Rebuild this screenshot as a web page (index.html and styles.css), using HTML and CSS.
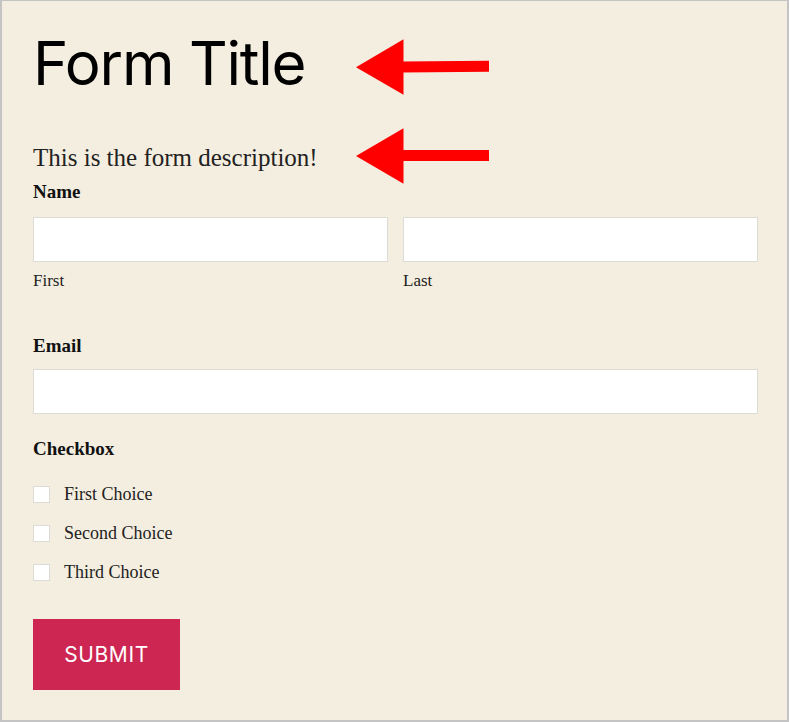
FILE: index.html
```html
<!DOCTYPE html>
<html>
<head>
<meta charset="utf-8">
<link rel="stylesheet" href="styles.css">
</head>
<body>
<div class="frame">
  <form class="form">
    <h1 class="title">Form Title</h1>
    <p class="desc">This is the form description!</p>
    <div class="field">
      <div class="label">Name</div>
      <div class="name-row">
        <div class="sub">
          <div class="input"></div>
          <div class="sublabel">First</div>
        </div>
        <div class="sub">
          <div class="input"></div>
          <div class="sublabel">Last</div>
        </div>
      </div>
    </div>
    <div class="field email">
      <div class="label">Email</div>
      <div class="input"></div>
    </div>
    <div class="field checks">
      <div class="label">Checkbox</div>
      <ul class="choices">
        <li><span class="box"></span>First Choice</li>
        <li><span class="box"></span>Second Choice</li>
        <li><span class="box"></span>Third Choice</li>
      </ul>
    </div>
    <div class="submit">SUBMIT</div>
  </form>
  <svg class="arrows" width="789" height="722" viewBox="0 0 789 722">
    <polygon fill="#ff0000" points="356,67.3 403.5,39.3 403.5,94.7"/>
    <polygon fill="#ff0000" points="402,61.6 489,60.7 489,71.7 402,72.6"/>
    <polygon fill="#ff0000" points="356,156 403.5,128.3 403.5,183.7"/>
    <polygon fill="#ff0000" points="402,150 489,150 489,161 402,161"/>
  </svg>
</div>
</body>
</html>
```

FILE: styles.css
```css
html, body {
  margin: 0;
  padding: 0;
}
body {
  width: 789px;
  height: 722px;
  background: #f4eee0;
}
.frame {
  position: relative;
  box-sizing: border-box;
  width: 789px;
  height: 722px;
  border-style: solid;
  border-color: #c4c4c4;
  border-width: 1px 2px 2px 2px;
  background: #f4eee0;
  overflow: hidden;
}
.form {
  padding: 0 29px 0 31px;
  color: #111;
  font-family: "Liberation Serif", serif;
}
.title {
  margin: 0;
  padding-top: 25px;
  font-family: Inter, "Noto Sans", sans-serif;
  font-weight: 400;
  font-size: 60px;
  line-height: 74px;
  letter-spacing: -1.2px;
  color: #000;
}
.desc {
  margin: 44px 0 0;
  font-size: 25px;
  line-height: 28px;
  color: #222;
}
.label {
  font-weight: 700;
  font-size: 19px;
  line-height: 22px;
  color: #111;
}
.field {
  margin-top: 9px;
}
.name-row {
  display: grid;
  grid-template-columns: 1fr 1fr;
  gap: 15px;
  margin-top: 14px;
}
.input {
  box-sizing: border-box;
  height: 45px;
  background: #fff;
  border: 1px solid #dcdcd6;
}
.sublabel {
  margin-top: 9px;
  font-size: 17px;
  line-height: 20px;
  color: #222;
}
.email {
  margin-top: 44px;
}
.email .input {
  margin-top: 12px;
}
.checks {
  margin-top: 24px;
}
.choices {
  list-style: none;
  margin: 26px 0 0;
  padding: 0;
}
.choices li {
  display: flex;
  align-items: center;
  gap: 14px;
  height: 17px;
  margin-bottom: 22px;
  font-size: 18px;
  color: #222;
}
.box {
  box-sizing: border-box;
  width: 17px;
  height: 17px;
  background: #fff;
  border: 1px solid #dcdcd6;
}
.submit {
  box-sizing: border-box;
  width: 147px;
  height: 71px;
  margin-top: 38px;
  background: #cd2653;
  color: #fff;
  display: flex;
  align-items: center;
  justify-content: center;
  font-family: Inter, "Noto Sans", sans-serif;
  font-size: 21px;
  letter-spacing: 0.6px;
}
.arrows {
  position: absolute;
  left: -2px;
  top: -1px;
  pointer-events: none;
}
```
